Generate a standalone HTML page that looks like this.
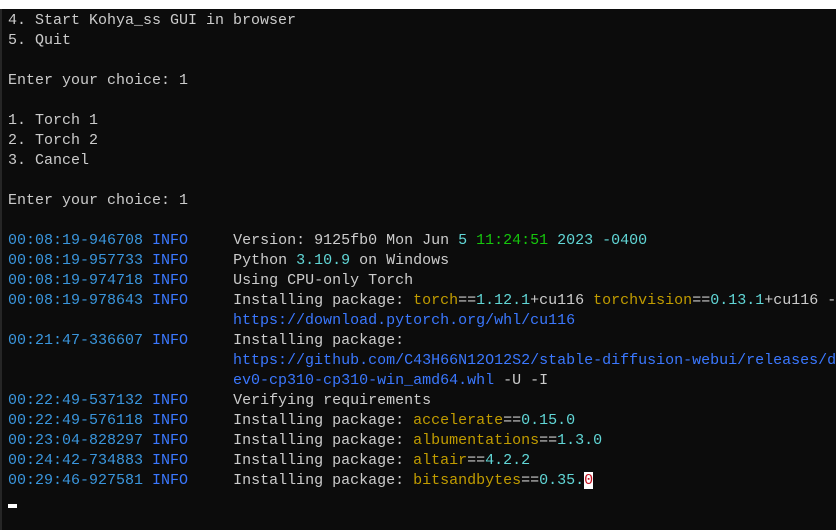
<!DOCTYPE html>
<html><head><meta charset="utf-8"><style>
html,body{margin:0;padding:0;width:836px;height:530px;overflow:hidden;background:#0c0c0c}
.top{position:absolute;left:0;top:0;width:836px;height:9px;background:#fff}
.side{position:absolute;left:0;top:9px;width:2px;height:521px;background:#262626}
pre{position:absolute;left:8px;top:11px;margin:0;font-family:"Liberation Mono","DejaVu Sans Mono",monospace;font-size:15px;line-height:20px;color:#cccccc;white-space:pre}
.t{color:#3a96dd}.i{color:#3b78ff}.c{color:#61d6d6}.g{color:#16c60c}.y{color:#c19c00}.u{color:#3b78ff}
.cur{background:#fff;color:#c50f1f}
.cs{position:absolute;left:8px;top:504px;width:9px;height:4px;background:#fff}
</style></head><body>
<div class="top"></div><div class="side"></div>
<pre>4. Start Kohya_ss GUI in browser
5. Quit

Enter your choice: 1

1. Torch 1
2. Torch 2
3. Cancel

Enter your choice: 1

<span class="t">00:08:19-946708</span> <span class="i">INFO</span>     Version: 9125fb0 Mon Jun <span class="c">5</span> <span class="g">11:24:51</span> <span class="c">2023 -0400</span>
<span class="t">00:08:19-957733</span> <span class="i">INFO</span>     Python <span class="c">3.10.9</span> on Windows
<span class="t">00:08:19-974718</span> <span class="i">INFO</span>     Using CPU-only Torch
<span class="t">00:08:19-978643</span> <span class="i">INFO</span>     Installing package: <span class="y">torch</span>==<span class="c">1.12.1</span>+cu116 <span class="y">torchvision</span>==<span class="c">0.13.1</span>+cu116 -
                         <span class="u">https://download.pytorch.org/whl/cu116</span>
<span class="t">00:21:47-336607</span> <span class="i">INFO</span>     Installing package:
                         <span class="u">https://github.com/C43H66N12O12S2/stable-diffusion-webui/releases/d</span>
                         <span class="u">ev0-cp310-cp310-win_amd64.whl</span> -U -I
<span class="t">00:22:49-537132</span> <span class="i">INFO</span>     Verifying requirements
<span class="t">00:22:49-576118</span> <span class="i">INFO</span>     Installing package: <span class="y">accelerate</span>==<span class="c">0.15.0</span>
<span class="t">00:23:04-828297</span> <span class="i">INFO</span>     Installing package: <span class="y">albumentations</span>==<span class="c">1.3.0</span>
<span class="t">00:24:42-734883</span> <span class="i">INFO</span>     Installing package: <span class="y">altair</span>==<span class="c">4.2.2</span>
<span class="t">00:29:46-927581</span> <span class="i">INFO</span>     Installing package: <span class="y">bitsandbytes</span>==<span class="c">0.35.</span><span class="cur">0</span>
</pre>
<div class="cs"></div>
</body></html>
